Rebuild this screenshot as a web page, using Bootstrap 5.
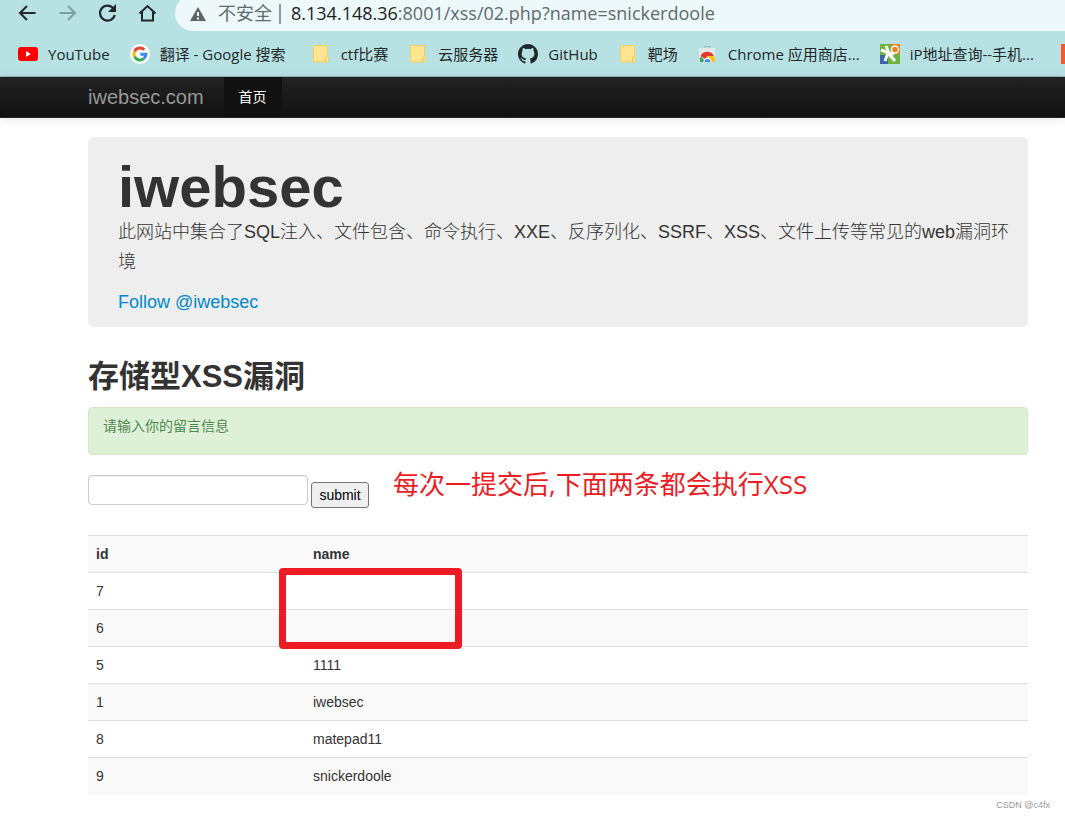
<!DOCTYPE html>
<html lang="zh-CN">
<head>
<meta charset="utf-8">
<meta name="viewport" content="width=device-width, initial-scale=1">
<title>iwebsec.com</title>
<link href="https://cdn.jsdelivr.net/npm/bootstrap@5.3.0/dist/css/bootstrap.min.css" rel="stylesheet">
<style>
body{font:14px/20px "Liberation Sans","Noto Sans CJK SC",sans-serif;color:#333;background:#fff;overflow-x:hidden}
.chrome-ui{background:#b8e1e4;font-family:"Open Sans","Noto Sans CJK SC",sans-serif;border-bottom:1px solid #8fb6b8;overflow:hidden}
.toolbar{height:31px;padding-left:17px;gap:20px}
.toolbar button{width:20px;height:26px;padding:0;border:0;background:none;line-height:0;flex:none}
.address{height:36px;margin-top:-5px;margin-left:-2px;padding:5px 0 4px 15px;border-radius:18px 0 0 18px;background:#ecf8f9;font-size:18px;line-height:27px;color:#5f6b6e;white-space:nowrap}
.address .host{color:#1d2224}
.divider{width:2px;height:20px;margin:0 10px 0 7px;background:#8f9a9c}
.bookmarks{height:45px;padding-left:18px;gap:20px;font-size:15px;line-height:20px;white-space:nowrap}
.bookmarks a{display:flex;align-items:center;gap:10px;flex:none;color:#202829;text-decoration:none}
.bookmarks .long-title{min-width:161px}
.bookmarks svg{width:20px;height:20px;flex:none}
.topnav{height:41px;padding:0 37px 0 88px;background:linear-gradient(#222,#111);border-bottom:1px solid #252525;box-shadow:0 1px 10px rgba(0,0,0,.1)}
.topnav .brand-link{font-size:20px;color:#999;text-decoration:none;margin-right:20px}
.topnav .active-link{line-height:40px;padding:0 15px;background:#111;color:#fff;text-decoration:none}
main{padding:19px 37px 0 88px}
.hero{padding:20px 15px 10px 30px;border-radius:6px;background:#eee;font-size:18px;line-height:30px;font-weight:200}
.hero h1{font-size:58px;line-height:60px;font-weight:700;margin:0}
.hero p{margin:0 0 10px}
.hero a{color:#0088cc;text-decoration:none;font-weight:400}
h2{font-size:32px;line-height:40px;font-weight:700;margin:30px 0 10px}
main h2{font-size:31px}
.notice{padding:8px 14px 18px;border:1px solid #d6e9c6;border-radius:4px;background:#dff0d8;color:#468847;text-shadow:0 1px 0 rgba(255,255,255,.5);margin-bottom:20px}
.message-form{gap:3px;height:60px}
.message-form input{width:220px;height:30px;border:1px solid #ccc;border-radius:4px;padding:4px 6px;box-shadow:inset 0 1px 1px rgba(0,0,0,.075)}
.message-form button{width:58px;height:26px;margin-top:7px;padding:1px 0;border:1px solid #767676;border-radius:3px;background:#efefef;color:#000;line-height:20px}
.remark{margin:-6px 0 0 21px;font:26px/30px "Open Sans","Noto Sans CJK SC",sans-serif;color:#ed1c24;white-space:nowrap}
.records{--bs-table-striped-bg:#f9f9f9;--bs-table-striped-color:#333;--bs-table-color:#333;margin:0}
.records th,.records td{height:37px;padding:8px;border:0;border-top:1px solid #ddd}
.records th:first-child{width:217px}
.highlight-box{left:191px;top:33px;width:183px;height:81px;border:7px solid #ed1c24;border-radius:4px;pointer-events:none}
.credit{padding-right:15px;font-size:9px;line-height:20px;color:#999}
</style>
</head>
<body>
<header class="chrome-ui">
  <div class="toolbar d-flex align-items-start">
    <button aria-label="Back"><svg width="20" height="26" fill="none" stroke="#202829" stroke-width="2"><path d="M18.500 13H3.500M10 6l-7 7 7 7"/></svg></button>
    <button aria-label="Forward"><svg width="20" height="26" fill="none" stroke="#809ea1" stroke-width="2"><path d="M2.500 13h15M11 6l7 7-7 7"/></svg></button>
    <button aria-label="Reload"><svg width="20" height="26" fill="none" stroke="#202829" stroke-width="2.200"><path d="M16.500 8.500A7.500 7.500 0 1 0 17.800 15"/><path fill="#202829" stroke="none" d="M19 4v8h-8z"/></svg></button>
    <button aria-label="Home"><svg width="20" height="26" fill="none" stroke="#202829" stroke-width="2"><path d="M2.500 13.500L10.500 6l8 7.500M5 12v8.500h11V12"/></svg></button>
    <div class="address d-flex align-items-center flex-grow-1">
      <svg class="me-2 flex-shrink-0" width="16" height="14"><path d="M8 0l8 14H0z" fill="#5f6368"/><path d="M8 5v4M8 10.500v2" stroke="#ecf8f9" stroke-width="2"/></svg>
      <span class="ms-1">不安全</span><span class="divider"></span>
      <span><span class="host">8.134.148.36</span>:8001/xss/02.php?name=snickerdoole</span>
    </div>
  </div>
  <nav class="bookmarks d-flex align-items-center">
    <a href="#"><svg viewBox="0 0 20 20"><rect y="3" width="20" height="14" rx="3" fill="#f00"/><path d="M8 7l5 3-5 3z" fill="#fff"/></svg>YouTube</a>
    <a class="long-title" href="#"><svg viewBox="0 0 20 20"><circle cx="10" cy="10" r="10" fill="#fff"/><g fill="none" stroke-width="3"><path d="M4.600 7.300A6 6 0 0 1 14.300 5.800" stroke="#ea4335"/><path d="M4.600 7.300a6 6 0 0 0 0 5.400" stroke="#fbbc05"/><path d="M4.600 12.700a6 6 0 0 0 9.200 2" stroke="#34a853"/><path d="M13.800 14.700A6 6 0 0 0 16 10.300h-5.700" stroke="#4285f4"/></g></svg>翻译 - Google 搜索</a>
    <a href="#"><svg viewBox="0 0 20 20"><path d="M2.500 1.500h14v11l1 1v3l-1 1.500h-14z" fill="#ffe591" stroke="#f2cf63"/><path d="M14.500 18v-4.500l2-1" fill="none" stroke="#eec54e"/></svg>ctf比赛</a>
    <a href="#"><svg viewBox="0 0 20 20"><path d="M2.500 1.500h14v11l1 1v3l-1 1.500h-14z" fill="#ffe591" stroke="#f2cf63"/><path d="M14.500 18v-4.500l2-1" fill="none" stroke="#eec54e"/></svg>云服务器</a>
    <a href="#"><svg viewBox="0 0 16 16"><path fill="#202829" d="M8 0C3.580 0 0 3.580 0 8c0 3.540 2.290 6.530 5.470 7.590.4.070.55-.17.55-.38 0-.19-.01-.82-.01-1.490-2.010.37-2.530-.49-2.690-.94-.09-.23-.48-.94-.82-1.130-.28-.15-.68-.52-.01-.53.63-.01 1.080.58 1.230.82.72 1.210 1.870.87 2.330.66.07-.52.28-.87.51-1.070-1.780-.2-3.640-.89-3.640-3.950 0-.87.31-1.590.82-2.150-.08-.2-.36-1.020.08-2.120 0 0 .67-.21 2.200.82a7.600 7.600 0 0 1 4 0c1.530-1.040 2.200-.82 2.200-.82.44 1.100.16 1.920.08 2.120.51.56.82 1.270.82 2.150 0 3.070-1.870 3.750-3.650 3.950.29.25.54.73.54 1.480 0 1.070-.01 1.930-.01 2.200 0 .21.15.46.55.38A8.010 8.010 0 0 0 16 8c0-4.420-3.580-8-8-8"/></svg>GitHub</a>
    <a href="#"><svg viewBox="0 0 20 20"><path d="M2.500 1.500h14v11l1 1v3l-1 1.500h-14z" fill="#ffe591" stroke="#f2cf63"/><path d="M14.500 18v-4.500l2-1" fill="none" stroke="#eec54e"/></svg>靶场</a>
    <a class="long-title" href="#"><svg viewBox="0 0 20 20"><path d="M7 5V2.500h5V5" fill="none" stroke="#aab4b5"/><path d="M1 4h16v14H1z" fill="#e4e8e9"/><path d="M2 18a7.500 7.500 0 0 1 1-6l4 6z" fill="#34a853"/><path d="M2.500 12a7.500 7.500 0 0 1 13.500 0z" fill="#e33b2e"/><path d="M3 12h7l-3.500 3z" fill="#e33b2e"/><path d="M10 12h6q1.500 3 1 6h-5z" fill="#fbc116"/><path d="M5.500 18a4 4 0 0 1 8 0z" fill="#fff"/><path d="M6.500 18a3 3 0 0 1 6 0z" fill="#4285f4"/></svg>Chrome 应用商店...</a>
    <a class="long-title" href="#"><svg viewBox="0 0 20 20"><path d="M0 0h20v20H0z" fill="#6db33f"/><path d="M11 0h9v10h-9z" fill="#ef7d1a"/><path d="M0 11h8v9H0z" fill="#3d62ae"/><path d="M6 2l3 7M1 6l8 3M14 10l-5-1M8 9l-3 8M9 10l6 7" fill="none" stroke="#fff" stroke-width="3"/><circle cx="15" cy="5.500" r="3.500" fill="#ef7d1a" stroke="#fff" stroke-width="1.500"/></svg>iP地址查询--手机...</a>
    <a href="#" aria-label="Bookmark"><svg viewBox="0 0 20 20"><path d="M0 0h20v20H0z" fill="#fc5531"/></svg></a>
  </nav>
</header>
<nav class="topnav d-flex align-items-center">
  <a class="brand-link" href="#">iwebsec.com</a>
  <a class="active-link" href="#">首页</a>
</nav>
<main>
  <section class="hero">
    <h1>iwebsec</h1>
    <p>此网站中集合了SQL注入、文件包含、命令执行、XXE、反序列化、SSRF、XSS、文件上传等常见的web漏洞环境</p>
    <a class="d-block" href="#">Follow @iwebsec</a>
  </section>
  <h2>存储型XSS漏洞</h2>
  <div class="notice">请输入你的留言信息</div>
  <form class="message-form d-flex align-items-start">
    <input type="text" name="name" aria-label="留言信息">
    <button type="submit">submit</button>
    <div class="remark">每次一提交后,下面两条都会执行XSS</div>
  </form>
  <div class="position-relative">
    <table class="table table-striped records">
      <tbody>
        <tr><th scope="col">id</th><th scope="col">name</th></tr>
        <tr><td>7</td><td></td></tr>
        <tr><td>6</td><td></td></tr>
        <tr><td>5</td><td>1111</td></tr>
        <tr><td>1</td><td>iwebsec</td></tr>
        <tr><td>8</td><td>matepad11</td></tr>
        <tr><td>9</td><td>snickerdoole</td></tr>
      </tbody>
    </table>
    <div class="highlight-box position-absolute"></div>
  </div>
</main>
<footer class="credit text-end">CSDN @c4fx</footer>
<script src="https://cdn.jsdelivr.net/npm/bootstrap@5.3.0/dist/js/bootstrap.bundle.min.js"></script>
</body>
</html>
